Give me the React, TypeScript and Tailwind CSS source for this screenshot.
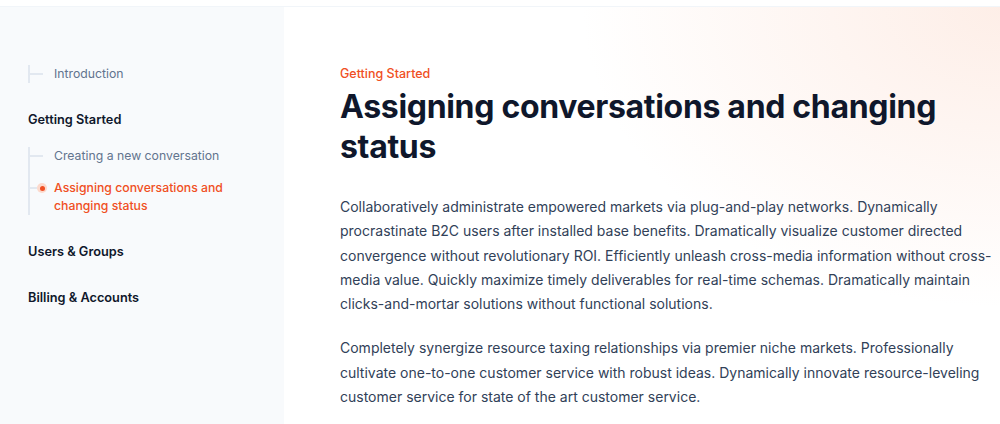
import React from 'react'

const SUB_ITEMS = [
  { label: 'Creating a new conversation', active: false },
  { label: 'Assigning conversations and changing status', active: true },
]

function Tick({ active }: { active?: boolean }) {
  if (active) {
    return (
      <span className="absolute left-0 top-[4px] flex items-center">
        <span className="h-[2px] w-[7px] bg-slate-200" />
        <span className="flex h-[10px] w-[10px] items-center justify-center rounded-full bg-[#fcd9cc]">
          <span className="h-[5px] w-[5px] rounded-full bg-[#f04f23]" />
        </span>
      </span>
    )
  }
  return <span className="absolute left-0 top-[8px] h-[2px] w-[13px] bg-slate-200" />
}

function Sidebar() {
  return (
    <aside className="w-[284px] shrink-0 bg-slate-50 pl-[28px] pt-[58px] text-[12.25px] leading-[18px]">
      <div className="relative border-l-2 border-slate-200 pl-[24px] text-slate-500">
        <Tick />
        Introduction
      </div>

      <h4 className="mt-[28px] text-[12.75px] font-semibold text-slate-900">Getting Started</h4>
      <ul className="mt-[18px] space-y-[14px] border-l-2 border-slate-200">
        {SUB_ITEMS.map(item => (
          <li
            key={item.label}
            className={`relative pl-[24px] pr-[40px] ${item.active ? 'font-medium text-[#f04f23]' : 'text-slate-500'}`}
          >
            <Tick active={item.active} />
            {item.label}
          </li>
        ))}
      </ul>

      <h4 className="mt-[28px] text-[12.75px] font-semibold text-slate-900">Users &amp; Groups</h4>
      <h4 className="mt-[28px] text-[12.75px] font-semibold text-slate-900">Billing &amp; Accounts</h4>
    </aside>
  )
}

export default function App() {
  return (
    <div className="h-[424px] w-full overflow-hidden bg-white font-['Inter',sans-serif] antialiased">
      <div className="h-[7px] border-b border-slate-100" />
      <div className="flex h-full">
        <Sidebar />
        <main className="relative flex-1 pl-[56px] pt-[58px]">
          <div className="pointer-events-none absolute inset-0 bg-[radial-gradient(ellipse_420px_300px_at_100%_0%,rgba(251,213,196,0.4),rgba(255,255,255,0))]" />
          <div className="relative w-[662px]">
            <p className="text-[12.5px] font-medium leading-[18px] text-[#f04f23]">Getting Started</p>
            <h1 className="mt-[4px] text-[32px] font-bold leading-[40px] tracking-[-0.01em] text-slate-900">
              Assigning conversations and changing status
            </h1>
            <div className="mt-[28px] space-y-[20px] text-[14px] leading-[24.25px] text-slate-700">
              <p>
                Collaboratively administrate empowered markets via plug-and-play networks. Dynamically
                procrastinate B2C users after installed base benefits. Dramatically visualize customer directed
                convergence without revolutionary ROI. Efficiently unleash cross-media information without
                cross-media value. Quickly maximize timely deliverables for real-time schemas. Dramatically
                maintain clicks-and-mortar solutions without functional solutions.
              </p>
              <p>
                Completely synergize resource taxing relationships via premier niche markets. Professionally
                cultivate one-to-one customer service with robust ideas. Dynamically innovate resource-leveling
                customer service for state of the art customer service.
              </p>
            </div>
          </div>
        </main>
      </div>
    </div>
  )
}
